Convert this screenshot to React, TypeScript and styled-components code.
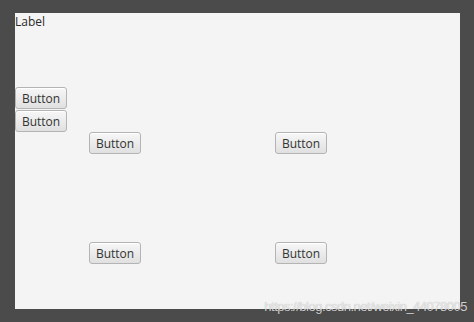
import React from 'react';
import styled, { createGlobalStyle } from 'styled-components';

const GlobalStyle = createGlobalStyle`
  html, body {
    margin: 0;
    padding: 0;
    background: #4b4b4b;
  }
  body {
    font-family: "Open Sans", "Noto Sans", sans-serif;
  }
`;

const Stage = styled.div`
  position: relative;
  width: 474px;
  height: 322px;
  box-sizing: border-box;
  padding: 13px 14px 13px 15px;
  background: #4b4b4b;
  overflow: hidden;
`;

const Pane = styled.div`
  width: 445px;
  height: 296px;
  background: #f4f4f4;
  display: grid;
  grid-template-columns: 52px 22px 52px 134px 52px 1fr;
  grid-template-rows: 74px 23px 22px 110px 22px 1fr;
`;

const Label = styled.span`
  grid-column: 1 / span 2;
  grid-row: 1;
  align-self: start;
  padding-top: 1px;
  font-size: 12px;
  line-height: 15px;
  color: #2a2a2a;
`;

const Button = styled.button<{ col: number; row: number }>`
  grid-column: ${p => p.col};
  grid-row: ${p => p.row};
  align-self: start;
  width: 52px;
  height: 22px;
  box-sizing: border-box;
  padding: 0;
  border: 1px solid #b4b4b4;
  border-radius: 3px;
  background: linear-gradient(#f7f7f7, #e0e0e0);
  box-shadow: inset 0 1px 0 #ffffff;
  font-family: "Open Sans", "Noto Sans", sans-serif;
  font-size: 12px;
  color: #333333;
  cursor: default;
`;

const Watermark = styled.div`
  position: absolute;
  right: 7px;
  bottom: 8px;
  font-family: "Liberation Sans", Arial, sans-serif;
  font-size: 13px;
  letter-spacing: -0.5px;
  color: rgba(235, 235, 235, 0.85);
  text-shadow: 0 0 1px rgba(0, 0, 0, 0.25);
`;

export default function App() {
  return (
    <>
      <GlobalStyle />
      <Stage>
        <Pane>
          <Label>Label</Label>
          <Button col={1} row={2}>Button</Button>
          <Button col={1} row={3}>Button</Button>
          <Button col={3} row={4}>Button</Button>
          <Button col={5} row={4}>Button</Button>
          <Button col={3} row={5}>Button</Button>
          <Button col={5} row={5}>Button</Button>
        </Pane>
        <Watermark>https://blog.csdn.net/weixin_44078005</Watermark>
      </Stage>
    </>
  );
}
